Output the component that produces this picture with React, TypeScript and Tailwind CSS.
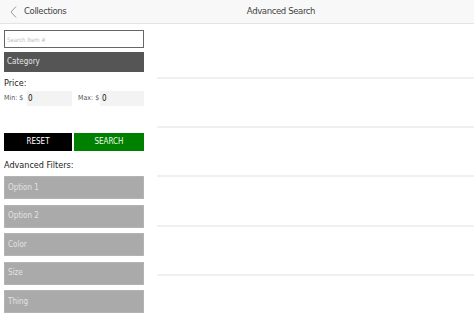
import React from "react";

const font = { fontFamily: '"DejaVu Sans Condensed", "Liberation Sans", sans-serif' };

const filters = ["Option 1", "Option 2", "Color", "Size", "Thing"];

export default function App() {
  return (
    <div className="w-[474px] h-[323px] bg-white overflow-hidden text-[#333]" style={font}>
      <header className="relative h-[24px] bg-[#f8f8f8] border-b border-[#e4e4e4] flex items-center">
        <div className="flex items-center pl-[10px] gap-[7px] text-[9.5px] tracking-[-0.4px] text-[#444]">
          <svg width="7" height="12" viewBox="0 0 7 12" fill="none">
            <path d="M6 0.5L1 6l5 5.5" stroke="#999" strokeWidth="1" />
          </svg>
          <span>Collections</span>
        </div>
        <div className="absolute left-[88px] right-0 text-center text-[9.5px] tracking-[-0.4px] text-[#444]">Advanced Search</div>
      </header>

      <div className="flex">
        <aside className="w-[148px] px-[4px] pt-[6px] flex flex-col">
          <div className="h-[18px] border border-[#666] flex items-center px-[2px] text-[6px] text-[#bbb]">Search Item #</div>
          <div className="mt-[4px] h-[20px] bg-[#555] flex items-center px-[3px] text-[8px] text-[#e6e6e6]">Category</div>

          <div className="mt-[5px] text-[9px] text-[#222] leading-[12px]">Price:</div>
          <div className="mt-[2px] flex items-center h-[15px] text-[7px] text-[#555] whitespace-nowrap">
            <span className="w-[23px]">Min: $</span>
            <div className="w-[45px] h-full bg-[#f3f3f3] flex items-center px-[1px] text-[8px] text-[#111]">0</div>
            <span className="ml-[6px] w-[22px]">Max: $</span>
            <div className="flex-1 h-full bg-[#f3f3f3] flex items-center px-[2px] text-[8px] text-[#111]">0</div>
          </div>

          <div className="mt-[27px] flex gap-[2px] h-[18px] text-[8px]">
            <button className="w-[68px] bg-black text-white">RESET</button>
            <button className="flex-1 bg-[#008000] text-[#e8ffe8]">SEARCH</button>
          </div>

          <div className="mt-[8px] text-[9px] text-[#222] leading-[12px]">Advanced Filters:</div>

          <div className="mt-[5px] flex flex-col gap-[5.5px]">
            {filters.map((f) => (
              <div key={f} className="h-[23px] bg-[#aaa] border border-[#b4b4b4] flex items-center px-[3px] text-[8px] text-[#e2e2e2]">
                {f}
              </div>
            ))}
          </div>
        </aside>

        <main className="flex-1 pl-[9px]">
          <div className="h-[55px] border-b-2 border-[#f0f0f0]" />
          <div className="h-[49px] border-b-2 border-[#f0f0f0]" />
          <div className="h-[49px] border-b-2 border-[#f0f0f0]" />
          <div className="h-[50px] border-b-2 border-[#f0f0f0]" />
          <div className="h-[49px] border-b-2 border-[#f0f0f0]" />
        </main>
      </div>
    </div>
  );
}
